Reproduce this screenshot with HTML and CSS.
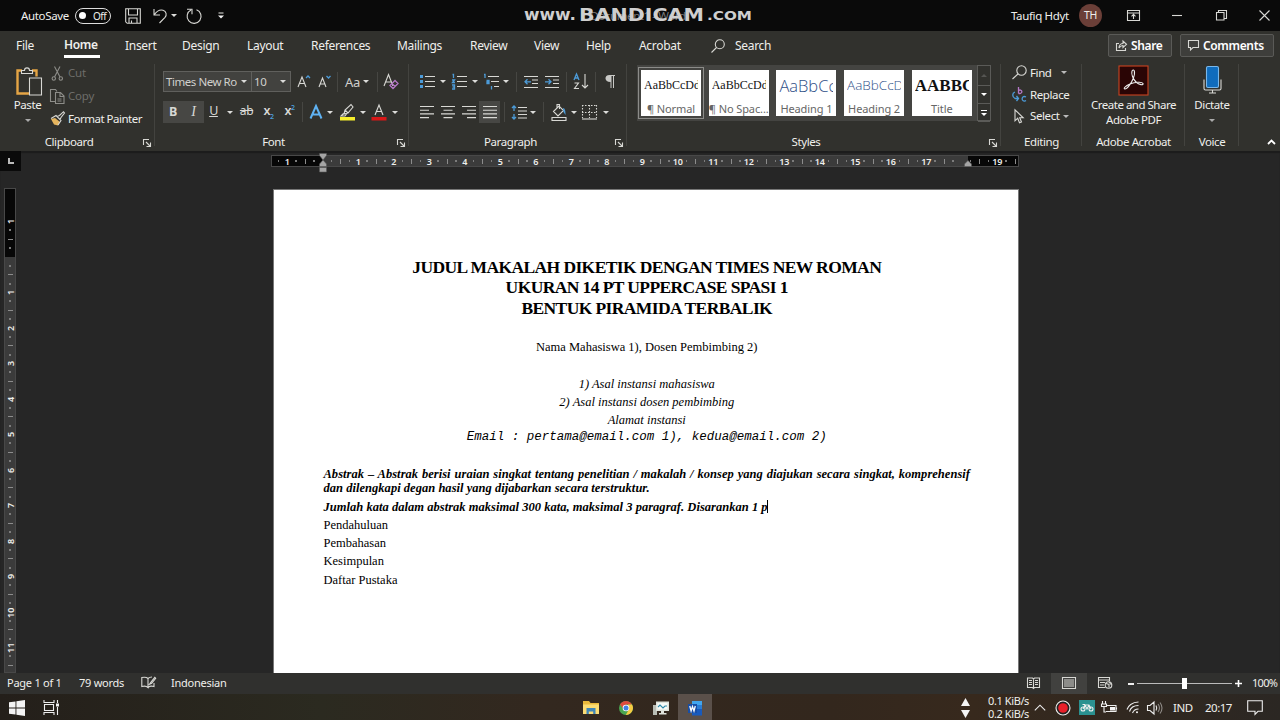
FILE: index.html
```html
<!DOCTYPE html>
<html lang="en">
<head>
    <meta charset="UTF-8">
    <meta name="viewport" content="width=device-width, initial-scale=1.0">
    <title>Document1 - Word</title>
    <link rel="stylesheet" href="styles.css">
</head>
<body>
    <header class="titlebar">
        <div class="quick">
            <span class="autosave">AutoSave</span>
            <span class="toggle"><i></i>Off</span>
            <svg class="save" width="16" height="16" viewBox="0 0 16 16"><path d="M.7.7h14.6v14.6H2.2L.7 13.8zM3.5 1v6h9V1M4 15v-5h8v5M6.5 15v-2.5"/></svg>
            <svg class="undo" width="15" height="16" viewBox="0 0 15 16"><path d="M1 1v6h6M1.3 6.600C4 3 7 1.300 10 2.300c3.500 1.200 4 4.700 2 7L6.500 15"/></svg>
            <i class="caret"></i>
            <svg class="redo" width="16" height="16" viewBox="0 0 16 16"><path d="M1 1.200h5v5M10.500 1.800a7 7 0 1 1-5.500.3"/></svg>
            <svg class="more" width="6" height="7" viewBox="0 0 6 7"><path d="M.5 1h5"/><path class="solid" d="M0 3.500h6L3 6.500z"/></svg>
        </div>
        <div class="doc-title">
            <span>Document1 - Word</span>
            <svg class="watermark" width="232" height="20" viewBox="0 0 232 20">
                <text x="1" y="16" font-size="15" textLength="52" lengthAdjust="spacingAndGlyphs">www.</text>
                <text x="56" y="16.500" font-size="17" textLength="125" lengthAdjust="spacingAndGlyphs">BANDICAM</text>
                <text x="184" y="16" font-size="12" textLength="45" lengthAdjust="spacingAndGlyphs">.COM</text>
            </svg>
        </div>
        <div class="account">
            <span class="user">Taufiq Hdyt</span>
            <span class="avatar">TH</span>
            <svg width="13" height="11" viewBox="0 0 13 11"><path d="M.5.5h12v10H.5zM.5 3h12M6.500 9V4.500M4.500 6.300l2-2 2 2"/></svg>
            <svg width="11" height="11" viewBox="0 0 11 11"><path d="M0 5.500h10"/></svg>
            <svg width="11" height="11" viewBox="0 0 11 11"><path d="M.5 2.500h7.500v7.500H.5zM2.500 2.500v-2h8v8H8"/></svg>
            <svg width="11" height="11" viewBox="0 0 11 11"><path d="M.5.5l10 10M10.500.5l-10 10"/></svg>
        </div>
    </header>

    <nav class="tabs">
        <span>File</span>
        <span class="active">Home</span>
        <span>Insert</span>
        <span>Design</span>
        <span>Layout</span>
        <span>References</span>
        <span>Mailings</span>
        <span>Review</span>
        <span>View</span>
        <span>Help</span>
        <span>Acrobat</span>
        <svg width="14" height="14" viewBox="0 0 14 14"><circle cx="8.800" cy="5.200" r="4.500"/><path d="M5.500 8.500L.5 13.500"/></svg>
        <span>Search</span>
        <div class="tab-buttons">
            <button class="share"><svg width="11" height="11" viewBox="0 0 11 11"><path d="M3 3.500H.5v7h9V8M3 8c0-3 2-4.500 4-4.500V1l3.500 3.300L7 7.500V5.500C5 5.500 4 6.500 3 8"/></svg>Share</button>
            <button class="comments"><svg width="11" height="11" viewBox="0 0 11 11"><path d="M.5.5h10v7H5L2.500 10V7.500h-2z"/></svg>Comments</button>
        </div>
    </nav>

    <section class="ribbon">
        <div class="group clipboard">
            <div class="body">
                <div class="paste">
                    <svg width="27" height="29" viewBox="0 0 27 29">
                        <path class="orange" d="M6 3.500H1.500v23H14M16 3.500h4.500v6"/>
                        <path d="M5.500 6.500V3.500h3c0-3.500 5-3.500 5 0h3v3z"/>
                        <path class="paper" d="M13.500 11h12v17h-12z"/>
                    </svg>
                    <span>Paste</span>
                    <i class="caret small"></i>
                </div>
                <div class="clip-list">
                    <div class="dim"><svg width="15" height="15" viewBox="0 0 15 15"><path d="M4.500.5L10 11M10 .5L4.500 11"/><circle cx="3.800" cy="12.500" r="1.700"/><circle cx="10.800" cy="12.500" r="1.700"/></svg>Cut</div>
                    <div class="dim"><svg width="15" height="15" viewBox="0 0 15 15"><path d="M5 12.500H.5V.5h5l1.500 2M5.500 3.500h5l3.500 3.500v7.500H5.500zM10 4v3.500h4M7.500 10h4M7.500 12h4"/></svg>Copy</div>
                    <div><svg width="15" height="15" viewBox="0 0 15 15"><path class="gold" d="M1 8l4-1 5 4-2 3.500-4-1z"/><path d="M1 7.500l5-3 5 5-3 4.500M7 5.500l2.500-1L13.500.7 14.500 2 11 6.500l-1 2"/></svg>Format Painter</div>
                </div>
            </div>
            <footer>Clipboard</footer>
            <svg class="launcher" width="8" height="8" viewBox="0 0 8 8"><path d="M.5 6V.5H6M3 3l4 4M7.500 3.500v4h-4"/></svg>
        </div>

        <div class="group font">
            <div class="body">
                <div class="row row1">
                    <div class="combos">
                        <span class="combo name">Times New Ro<i class="caret"></i></span>
                        <span class="combo size">10<i class="caret"></i></span>
                    </div>
                    <svg width="14" height="16" viewBox="0 0 14 16"><path d="M1 13L5 3l4 10M2.500 9.500h5"/><path class="blue" d="M9 4l2-2 2 2"/></svg>
                    <svg width="13" height="16" viewBox="0 0 13 16"><path d="M1 13L4.500 4l3.500 9M2.300 10h4.500"/><path class="blue" d="M8.500 2l2 2 2-2"/></svg>
                    <b class="sep"></b>
                    <span class="case">Aa<i class="caret"></i></span>
                    <b class="sep"></b>
                    <svg width="17" height="17" viewBox="0 0 17 17"><path d="M1 13L5.500 1.500 10 13M2.500 9h6"/><path class="purple" d="M7 12.500l5-5 3 3-5 5zM9 10.500l3 3"/></svg>
                </div>
                <div class="row row2">
                    <span class="on"><strong>B</strong></span>
                    <span class="on serif"><em>I</em></span>
                    <span><u>U</u></span>
                    <i class="caret"></i>
                    <span><s>ab</s></span>
                    <span class="script">x<sub>2</sub></span>
                    <span class="script">x<sup>2</sup></span>
                    <b class="sep"></b>
                    <svg width="14" height="15" viewBox="0 0 14 15"><path class="glow" d="M1.500 13.500L7 1l5.500 12.500M3.500 9.500h7"/></svg>
                    <i class="caret"></i>
                    <svg width="17" height="17" viewBox="0 0 17 17"><path d="M5 10l1-4 6-5.500L14 3 9 9zM6 6l3 3M4.500 9.500L2 12h4l1.500-2"/><path class="yellow" d="M1 13h15v3.500H1z"/></svg>
                    <i class="caret"></i>
                    <svg width="16" height="17" viewBox="0 0 16 17"><path d="M4 11L8 1l4 10M5.500 7.500h5"/><path class="red" d="M.5 13h15v3.500H.5z"/></svg>
                    <i class="caret"></i>
                </div>
            </div>
            <footer>Font</footer>
            <svg class="launcher" width="8" height="8" viewBox="0 0 8 8"><path d="M.5 6V.5H6M3 3l4 4M7.500 3.500v4h-4"/></svg>
        </div>

        <div class="group paragraph">
            <div class="body">
                <div class="row row1">
                    <svg width="15" height="15" viewBox="0 0 15 15"><path d="M5 2.500h10M5 7.500h10M5 12.500h10"/><path class="bluefill" d="M0 1h3v3H0zM0 6h3v3H0zM0 11h3v3H0z"/></svg>
                    <i class="caret"></i>
                    <svg width="15" height="16" viewBox="0 0 15 16"><path d="M5 2.500h10M5 7.500h10M5 12.500h10"/><path class="blue" d="M.5.5h1v3.500M0 6h2.500L.5 8.500h2.500M0 11h2.500v4H0M.5 13h2"/></svg>
                    <i class="caret"></i>
                    <svg width="15" height="16" viewBox="0 0 15 16"><path d="M4 2.500h11M7 7.500h8M10 12.500h5"/><path class="blue" d="M0 .5h1V4M2.500 6.500h2.500v3H3V8h2M7.500 12v3.500"/></svg>
                    <i class="caret"></i>
                    <b class="sep"></b>
                    <svg width="14" height="14" viewBox="0 0 14 14"><path d="M0 1.500h14M8 5h6M8 8.500h6M0 12.500h14"/><path class="blue" d="M7 6.800H1M3.500 4.300L1 6.800l2.500 2.500"/></svg>
                    <svg width="14" height="14" viewBox="0 0 14 14"><path d="M0 1.500h14M8 5h6M8 8.500h6M0 12.500h14"/><path class="blue" d="M0 6.800h6M3.500 4.300L6 6.800 3.500 9.300"/></svg>
                    <b class="sep"></b>
                    <svg width="16" height="17" viewBox="0 0 16 17"><path class="blue" d="M1 7l2.500-6L6 7M2 5h3"/><path d="M1.500 10h4l-4 5.500h4.500M12 1v14M9 12l3 3 3-3"/></svg>
                    <b class="sep"></b>
                    <svg width="11" height="13" viewBox="0 0 11 13"><path class="light" d="M4.500 0H10v1H9v12H8V1H6.500v12h-1V7C-1 7-1 0 4.500 0z"/></svg>
                </div>
                <div class="row row2">
                    <svg width="14" height="14" viewBox="0 0 14 14"><path d="M0 1.500h14M0 5.200h9M0 8.900h14M0 12.600h9"/></svg>
                    <svg width="14" height="14" viewBox="0 0 14 14"><path d="M0 1.500h14M2.500 5.200h9M0 8.900h14M2.500 12.600h9"/></svg>
                    <svg width="14" height="14" viewBox="0 0 14 14"><path d="M0 1.500h14M5 5.200h9M0 8.900h14M5 12.600h9"/></svg>
                    <span class="on"><svg width="14" height="14" viewBox="0 0 14 14"><path d="M0 1.500h14M0 5.200h14M0 8.900h14M0 12.600h14"/></svg></span>
                    <b class="sep"></b>
                    <svg width="16" height="15" viewBox="0 0 16 15"><path d="M7 2.500h9M7 6h9M7 9.500h9M7 13h9"/><path class="blue" d="M3 1v5M1 3l2-2 2 2M3 9v5M1 12l2 2 2-2"/></svg>
                    <i class="caret"></i>
                    <b class="sep"></b>
                    <svg width="16" height="17" viewBox="0 0 16 17"><path d="M2.500 7.500L8 2l4.500 4.500L7 12zM6 4V.5h2.500V5"/><path class="bluefill" d="M12 4c2 0 2.500 3 2.500 7l-2-3z"/><path d="M1 13.500h14v3H1z"/></svg>
                    <i class="caret"></i>
                    <svg width="15" height="15" viewBox="0 0 15 15"><path stroke-dasharray="1.500 1.500" d="M.5 0v13M14.500 0v13M7.500 0v13M0 .5h15M0 7.500h15"/><path d="M0 14h15"/></svg>
                    <i class="caret"></i>
                </div>
            </div>
            <footer>Paragraph</footer>
            <svg class="launcher" width="8" height="8" viewBox="0 0 8 8"><path d="M.5 6V.5H6M3 3l4 4M7.500 3.500v4h-4"/></svg>
        </div>

        <div class="group styles">
            <div class="body">
                <div class="gallery">
                    <div class="card selected"><p>AaBbCcDdEe</p><span>¶ Normal</span></div>
                    <div class="card"><p>AaBbCcDdEe</p><span>¶ No Spac...</span></div>
                    <div class="card h1"><p>AaBbCcDd</p><span>Heading 1</span></div>
                    <div class="card h2"><p>AaBbCcDdE</p><span>Heading 2</span></div>
                    <div class="card title"><p>AABBCC</p><span>Title</span></div>
                </div>
                <div class="scroller">
                    <span><i class="caret up"></i></span>
                    <span><i class="caret"></i></span>
                    <span class="expand"><i class="caret"></i></span>
                </div>
            </div>
            <footer>Styles</footer>
            <svg class="launcher" width="8" height="8" viewBox="0 0 8 8"><path d="M.5 6V.5H6M3 3l4 4M7.500 3.500v4h-4"/></svg>
        </div>

        <div class="group editing">
            <div class="body">
                <div><svg width="15" height="15" viewBox="0 0 15 15"><circle cx="9.500" cy="5.500" r="4.700"/><path d="M6 9L.5 14"/></svg>Find<i class="caret far"></i></div>
                <div><svg width="15" height="15" viewBox="0 0 15 15"><path class="purple" d="M6.500 0v6.500M6.500 3.500c3-2 5 2.500 1.500 3H6.500"/><path class="blue" d="M3 5C0 6 0 10 3 11.500h3M4.500 9l2 2.500-2 2.500M14 10c-3-1.500-4.500 1-3.500 3 .8 1.300 2.500 1.300 3.500.5"/></svg>Replace</div>
                <div><svg width="15" height="15" viewBox="0 0 15 15"><path d="M3 .8v11l2.700-2.500 1.800 4.500 2-.8-1.800-4.200h3.500z"/></svg>Select<i class="caret"></i></div>
            </div>
            <footer>Editing</footer>
        </div>

        <div class="group acrobat">
            <div class="body">
                <svg width="31" height="31" viewBox="0 0 31 31"><rect class="adobe" x="1" y="1" width="29" height="29"/><path class="swirl" d="M14 6c2-3 4 1 1 8-2 5-6 10-8 10s0-3 5-5c5-1.800 12-2.500 13-.5s-4 1.500-7-1.500c-3-3-5-8-4-11z"/></svg>
                <span>Create and Share<br>Adobe PDF</span>
            </div>
            <footer>Adobe Acrobat</footer>
        </div>

        <div class="group voice">
            <div class="body">
                <svg width="19" height="28" viewBox="0 0 19 28"><rect class="mic" x="3.500" y=".5" width="12" height="21" rx="1.500"/><path d="M1 13.500v9q0 1.500 1.500 1.500h14q1.500 0 1.500-1.500v-9M9.500 24v3M6 27h7"/></svg>
                <span>Dictate</span>
                <i class="caret small"></i>
            </div>
            <footer>Voice</footer>
        </div>

        <svg class="collapse" width="9" height="6" viewBox="0 0 9 6"><path d="M1 5l3.500-3.500L8 5"/></svg>
    </section>

    <main class="workspace">
        <div class="tab-stop"><svg width="6" height="6" viewBox="0 0 6 6"><path d="M1 0v5h5"/></svg></div>
        <div class="hruler" id="hruler">
            <svg class="indent" width="8" height="20" viewBox="0 0 8 20"><path d="M.5.5h7v2L4 7l3.500 4v2.500h-7V11L4 7 .5 2.500zM.5 14.500h7v4.500h-7z"/></svg>
            <svg class="indent right" width="8" height="7" viewBox="0 0 8 7"><path d="M.5 6.500V4L4 .5 7.500 4v2.500z"/></svg>
        </div>
        <div class="vruler" id="vruler"></div>
        <article class="page">
            <h1>JUDUL MAKALAH DIKETIK DENGAN TIMES NEW ROMAN<br>UKURAN 14 PT UPPERCASE SPASI 1<br>BENTUK PIRAMIDA TERBALIK</h1>
            <p class="authors">Nama Mahasiswa 1), Dosen Pembimbing 2)</p>
            <p class="origin">1) Asal instansi mahasiswa<br>2) Asal instansi dosen pembimbing<br>Alamat instansi</p>
            <p class="email">Email : pertama@email.com 1), kedua@email.com 2)</p>
            <p class="abstract">Abstrak – Abstrak berisi uraian singkat tentang penelitian / makalah / konsep yang diajukan secara singkat, komprehensif dan dilengkapi degan hasil yang dijabarkan secara terstruktur.</p>
            <p class="abstract last">Jumlah kata dalam abstrak maksimal 300 kata, maksimal 3 paragraf. Disarankan 1 p<i class="cursor"></i></p>
            <p class="section">Pendahuluan</p>
            <p class="section">Pembahasan</p>
            <p class="section">Kesimpulan</p>
            <p class="section">Daftar Pustaka</p>
        </article>
    </main>

    <footer class="statusbar">
        <div class="status-left">
            <span>Page 1 of 1</span>
            <span>79 words</span>
            <svg width="15" height="13" viewBox="0 0 15 13"><path d="M7 2.500C5.500 1 3 1 .8 1.500v9c2-.5 4.700-.5 6.200 1V2.500c1-1 2.500-1.500 4-1.500M7 11.500c1.500-1.500 4-1.500 6-1V7M13.800 1.300l-4 5-1.300 2 2.200-1 4-5z"/></svg>
            <span>Indonesian</span>
        </div>
        <div class="status-right">
            <span class="view"><svg width="13" height="12" viewBox="0 0 13 12"><path d="M.5 1h5l1 1 1-1h5v9.500h-5l-1 1-1-1h-5zM6.500 2v9M2 3.500h3M2 5.500h3M2 7.500h3M8 3.500h3M8 5.500h3M8 7.500h3"/></svg></span>
            <span class="view current"><svg width="14" height="12" viewBox="0 0 14 12"><path d="M.5.5h13v11H.5zM2 3h10M2 5h10M2 7h10M2 9h10"/></svg></span>
            <span class="view"><svg width="15" height="12" viewBox="0 0 15 12"><path d="M7 10.500H.5V.5h11V4M.5 3h11M2 5.500h5M2 8h4"/><circle cx="10.500" cy="8" r="3.300"/><path d="M8 6.500l3 1v3M11 5l2.500 3"/></svg></span>
            <span class="minus"></span>
            <span class="slider"><i></i></span>
            <svg class="plus" width="7" height="7" viewBox="0 0 7 7"><path d="M0 3.500h7M3.500 0v7"/></svg>
            <span class="zoom">100%</span>
        </div>
    </footer>

    <footer class="taskbar">
        <div class="start">
            <svg width="16" height="16" viewBox="0 0 16 16"><path class="white" d="M0 2.300L6.500 1.400v6.200H0zM7.400 1.200L16 0v7.600H7.400zM0 8.400h6.500v6.200L0 13.700zM7.400 8.400H16V16l-8.600-1.200z"/></svg>
            <svg width="17" height="15" viewBox="0 0 17 15"><path d="M1 0v2.500h10V0M1 15v-2.500h10V15M1.500 4.500h9v6h-9zM14.500 0v3M14.500 7v8"/><path class="white" d="M13 3.500h3v3h-3z"/></svg>
        </div>
        <div class="apps">
            <span class="app"><svg width="16" height="14" viewBox="0 0 16 14"><path fill="#e9b93c" d="M0 0h6l1.500 2H16v11H0z"/><path fill="#fbdc74" d="M0 3.500h16V13H0z"/><path fill="#3f86b8" d="M3.500 13V7h9v6h-2.300v-2.500H5.800V13z"/></svg></span>
            <span class="app"><svg width="14" height="14" viewBox="0 0 14 14"><circle cx="7" cy="7" r="7" fill="#4ba651"/><path fill="#de4b3d" d="M1 3.500A7 7 0 0 1 13 3.500H7L4.500 8z"/><path fill="#f6cc43" d="M13 3.500A7 7 0 0 1 6.800 14L9.500 9 9 3.500z"/><circle cx="7" cy="7" r="3.300" fill="#fff"/><circle cx="7" cy="7" r="2.500" fill="#4280e3"/></svg></span>
            <span class="app"><svg width="16" height="15" viewBox="0 0 16 15"><path fill="#b9bdb5" d="M0 4h4v10H0z"/><path fill="#dfe3dc" d="M3 .5h13V10H3zM8 10h3v2h2.500v1.500H6V12h2z"/><path fill="#f6faf7" d="M4.500 2h10v6.500h-10z"/><path stroke="#2e88a8" d="M5 6l2-2 3 3 2-2h2"/></svg></span>
            <span class="app open"><svg width="14" height="15" viewBox="0 0 14 15"><path fill="#41a5ee" d="M4 0h10v4H4z"/><path fill="#2b7cd3" d="M4 4h10v4H4z"/><path fill="#185abd" d="M4 8h10v6.500H4z"/><path fill="#174ea6" d="M0 3h9v9H0z"/><path stroke="#fff" stroke-width="1.300" d="M1.800 5l1.300 5 1.400-4.500L6 10l1.300-5"/></svg></span>
        </div>
        <div class="tray">
            <svg class="updown" width="9" height="22" viewBox="0 0 9 22"><path class="white" d="M0 9l4.500-8L9 9zM0 13h9l-4.500 8z"/></svg>
            <span class="speed">0.1 KiB/s<br>0.2 KiB/s</span>
            <svg width="12" height="7" viewBox="0 0 12 7"><path d="M.8 6.300L6 1.200l5.200 5.100"/></svg>
            <svg width="16" height="16" viewBox="0 0 16 16"><circle cx="8" cy="8" r="7" fill="#222"/><circle class="record" cx="8" cy="8" r="4.800"/></svg>
            <svg width="16" height="15" viewBox="0 0 16 15"><path class="teal" d="M0 0h16v15H0z"/><circle cx="4" cy="9" r="2"/><circle cx="12" cy="9" r="2"/><path d="M4 9l2-4h4l2 4M6 5l2 4 2-4M3.500 4.500H6"/></svg>
            <svg width="16" height="13" viewBox="0 0 16 13"><path d="M5 4.500h10v6H5M15.500 6.500v2"/><path class="white" d="M9 6h5v3.500H9z"/><path d="M1.500 0v3M4.500 0v3M.5 3h5v2.500H.5zM3 6v5h2"/></svg>
            <svg width="13" height="13" viewBox="0 0 13 13"><path d="M1 8.500C2 5 6 1 12.500 1M3.500 10.500c1-3.500 4-6 9-6M6.500 12c1-2.500 3-4 6-4"/><circle class="white" cx="11" cy="11.300" r="1"/></svg>
            <svg width="16" height="14" viewBox="0 0 16 14"><path d="M.5 4.500h2.500L7 1v12L3 9.500H.5zM9 4.500q1.500 2.500 0 5"/><path opacity=".5" d="M11 3q3 4 0 8M13 1.500q4 5.500 0 11"/></svg>
            <span class="lang">IND</span>
            <span class="clock">20:17</span>
            <svg width="16" height="15" viewBox="0 0 16 15"><path d="M.7.7h14.600v10.600H11L8 14.300v-3H.7z"/></svg>
        </div>
    </footer>

    <script>
        // four marks per centimetre: number, dot, half line, dot
        function drawRuler(id, first, last, hidden) {
            const ruler = document.getElementById(id);
            for (let i = first; i <= last; i++) {
                const mark = document.createElement('span');
                if (i % 4 === 0) {
                    mark.className = 'num';
                    if (!hidden.includes(i)) mark.textContent = Math.abs(i / 4);
                } else {
                    mark.className = i % 2 === 0 ? 'half' : 'dot';
                }
                ruler.appendChild(mark);
            }
        }
        drawRuler('hruler', -5, 78, [0, 72]);
        drawRuler('vruler', -4, 46, [0]);
    </script>
</body>
</html>
```
FILE: styles.css
```css
*{
    box-sizing: border-box;
}
body{
    margin: 0;
    width: 1280px;
    height: 720px;
    overflow: hidden;
    display: flex;
    flex-direction: column;
    background-color: #262626;
    color: #efefec;
    font-family: "Noto Sans", "Open Sans", sans-serif;
    font-size: 11.5px;
    line-height: 14px;
    letter-spacing: -0.4px;
}
svg{
    fill: none;
    stroke: #d8d8d4;
    stroke-width: 1.1;
    flex: none;
    overflow: visible;
}
p, h1{
    margin: 0;
}
.white, .light, .solid{
    fill: #f4f4f4;
    stroke: none;
}
.light{
    fill: #c8c8c5;
}
.blue{
    stroke: #4c9bd8;
    stroke-width: 1.3;
}
.bluefill{
    fill: #4c9bd8;
    stroke: none;
}
.purple{
    stroke: #b678c8;
    stroke-width: 1.3;
}
.caret{
    display: inline-block;
    flex: none;
    border: 3px solid transparent;
    border-top-color: #dcdcda;
    border-bottom: 0;
    width: 0;
    height: 0;
}
.caret.small{
    border-top-color: #aaa;
}

/* title bar */
.titlebar{
    height: 31px;
    flex: none;
    background-color: #0a0a0a;
    display: grid;
    grid-template-columns: 500px 276px 1fr;
}
.quick{
    display: flex;
    align-items: center;
    padding-left: 21px;
}
.autosave{
    width: 54px;
    letter-spacing: -0.35px;
}
.toggle{
    width: 36px;
    height: 16px;
    border: 1.500px solid #ddd;
    border-radius: 8px;
    display: flex;
    align-items: center;
    padding-left: 3px;
    gap: 7px;
    font-size: 10px;
    letter-spacing: -0.5px;
}
.toggle i{
    width: 7px;
    height: 7px;
    border-radius: 50%;
    background: #fff;
}
.save{
    margin-left: 14px;
}
.undo{
    margin-left: 12px;
}
.quick .caret{
    margin-left: 3px;
}
.redo{
    margin-left: 9px;
}
.more{
    margin-left: 16px;
}
.doc-title{
    position: relative;
    display: flex;
    align-items: center;
    justify-content: center;
    color: #777;
}
.watermark{
    position: absolute;
    left: 23px;
    top: 4px;
    fill: #cfcfcf;
    stroke: none;
    font-family: "DejaVu Sans", sans-serif;
    font-weight: bold;
    letter-spacing: 0;
}
.account{
    display: grid;
    grid-template-columns: 68px 48px 45px 44px 43px 20px;
    align-items: center;
    justify-items: start;
    padding-left: 235px;
}
.user{
    letter-spacing: -0.35px;
}
.avatar{
    width: 23px;
    height: 23px;
    border-radius: 50%;
    background: #6b3f38;
    text-align: center;
    font-size: 10.5px;
    line-height: 22px;
}

/* tabs */
.tabs{
    height: 31px;
    flex: none;
    background-color: #31312d;
    display: grid;
    grid-template-columns: 48px 61px 57px 65px 64px 86px 73px 64px 52px 53px 72px 24px 60px 1fr;
    align-items: center;
    padding: 0 0 2px 16px;
    font-size: 12px;
    letter-spacing: -0.3px;
}
.tabs span{
    line-height: 20px;
}
.tabs .active{
    font-weight: 600;
    justify-self: start;
    margin-top: 2px;
    height: 23px;
    border-bottom: 3px solid #fff;
    letter-spacing: -0.35px;
    width: 36px;
}
.tab-buttons{
    display: flex;
    gap: 8px;
    padding-left: 313px;
}
.tab-buttons button{
    height: 23px;
    padding: 0 0 0 7px;
    border: 1px solid #5a5a57;
    border-radius: 2px;
    background: #3e3e3b;
    color: #fff;
    font: 600 12px "Noto Sans", sans-serif;
    letter-spacing: -0.35px;
    display: flex;
    align-items: center;
    gap: 4px;
}
.share{
    width: 64px;
}
.comments{
    width: 94px;
}

/* ribbon */
.ribbon{
    height: 89px;
    flex: none;
    background-color: #31312d;
    display: grid;
    grid-template-columns: 155px 254px 218px 374px 81px 103px 54px 1fr;
}
.group{
    position: relative;
    display: flex;
    flex-direction: column;
    background: linear-gradient(#43433f, #43433f) right 2px / 1px 82px no-repeat;
}
.group .body{
    height: 72px;
}
.group footer{
    text-align: center;
    line-height: 16px;
    height: 16px;
    letter-spacing: -0.4px;
}
.clipboard footer{
    padding-right: 17px;
}
.font footer{
    padding-right: 17px;
}
.paragraph footer{
    padding-right: 15px;
}
.styles footer{
    padding-right: 16px;
}
.launcher{
    position: absolute;
    right: 4px;
    bottom: 4px;
}
.row{
    display: grid;
    align-items: center;
    justify-items: center;
}
.row1{
    height: 21px;
    margin-top: 9px;
}
.row2{
    height: 22px;
    margin-top: 9px;
}
.row > span{
    white-space: nowrap;
}
.sep{
    width: 1px;
    height: 20px;
    background: #464642;
}
.on{
    width: 100%;
    height: 22px;
    background: #474744;
    display: flex;
    align-items: center;
    justify-content: center;
}

.clipboard .body{
    display: flex;
}
.paste{
    width: 50px;
    display: flex;
    flex-direction: column;
    align-items: center;
    padding: 5px 0 0 5px;
}
.paste svg{
    margin-left: 3px;
}
.paste span{
    margin-top: 2px;
}
.paste .caret{
    margin-top: 7px;
}
.orange{
    stroke: #e5a545;
    stroke-width: 2.4;
}
.paper{
    fill: #31312d;
}
.gold{
    fill: #e5b55e;
    stroke: none;
}
.clip-list{
    display: flex;
    flex-direction: column;
}
.clip-list div{
    height: 22.7px;
    display: flex;
    align-items: center;
    gap: 3px;
    white-space: nowrap;
    letter-spacing: -0.5px;
}
.clip-list .dim{
    color: #6d6d69;
    letter-spacing: -0.2px;
}
.dim svg{
    stroke: #8d8d89;
}

.font .body{
    padding-left: 8px;
}
.font .row1{
    grid-template-columns: 128px 25px 16px 10px 30px 10px 18px;
}
.font .row2{
    grid-template-columns: 20px 21px 19px 14px 19px 25px 17px 8px 19px 10px 24px 8px 24px 8px;
    font-size: 12.500px;
    color: #d8d8d5;
}
.row2 > span:not(.on){
    margin-top: -2px;
}
.combos{
    display: flex;
    width: 128px;
}
.combo{
    height: 21px;
    border: 1px solid #60605d;
    background: #42423f;
    display: flex;
    align-items: center;
    justify-content: space-between;
    padding: 0 4px 0 2px;
    color: #d0d0cd;
    white-space: nowrap;
}
.name{
    width: 89px;
    letter-spacing: -0.45px;
}
.size{
    width: 40px;
    margin-left: -1px;
}
.case{
    font-size: 13px;
    display: flex;
    align-items: center;
    gap: 3px;
    color: #d0d0cd;
}
.serif{
    font-family: "Liberation Serif", serif;
    font-size: 14px;
}
.row2 .script{
    font-weight: 600;
}
.row2 sub, .row2 sup{
    font-size: 7px;
    line-height: 0;
    color: #4c9bd8;
}
.row2 s{
    font-size: 12px;
}
.glow{
    stroke: #5fb2f2;
    stroke-width: 2;
}
.yellow{
    fill: #f6ee2c;
    stroke: none;
}
.red{
    fill: #d81818;
    stroke: none;
}

.paragraph .body{
    padding-left: 8px;
}
.paragraph .row1{
    grid-template-columns: 20px 12px 20px 11px 22px 7px 14px 16px 26px 3px 26px 3px 26px;
}
.paragraph .row2{
    grid-template-columns: 20px 22px 20px 21px 8px 22px 5px 17px 14px 15px 17px 15px;
}

.styles .body{
    display: flex;
    padding: 3px 0 0 10px;
}
.gallery{
    width: 340px;
    height: 56px;
    background: #444441;
    display: grid;
    grid-template-columns: repeat(5, 60px);
    column-gap: 7.7px;
    padding: 5px 0 0 4px;
}
.card{
    height: 46px;
    background: #fff;
    text-align: center;
    color: #666;
    padding: 0 3px;
    font-size: 11px;
    letter-spacing: -0.1px;
    white-space: nowrap;
}
.card.selected{
    outline: 1.500px solid #8c8c89;
    outline-offset: 2px;
}
.card p{
    height: 31px;
    line-height: 31px;
    overflow: hidden;
    text-align: left;
    color: #111;
    font-family: "Liberation Serif", serif;
    font-size: 12px;
    letter-spacing: 0;
}
.card span{
    display: block;
    margin: 1px -3px 0;
}
.card.h1 p{
    color: #2f5088;
    font-family: "Open Sans", sans-serif;
    font-weight: 300;
    font-size: 16.500px;
}
.card.h2 p{
    color: #2f5088;
    font-family: "Open Sans", sans-serif;
    font-weight: 300;
    font-size: 13.500px;
}
.card.title p{
    font-weight: bold;
    font-size: 17px;
}
.scroller{
    width: 14px;
    height: 56px;
    display: grid;
    grid-template-rows: 20px 18px 18px;
    border: 1px solid #5b5b58;
}
.scroller span{
    display: flex;
    flex-direction: column;
    align-items: center;
    justify-content: center;
    border-bottom: 1px solid #5b5b58;
}
.scroller .up{
    border-bottom: 3px solid #555552;
    border-top: 0;
}
.scroller .caret:not(.up){
    border-top-color: #fff;
}
.expand::before{
    content: "";
    width: 6px;
    height: 1px;
    margin-bottom: 2px;
    background: #fff;
}

.editing .body{
    padding-left: 11px;
}
.editing .body div{
    height: 21.700px;
    display: flex;
    align-items: center;
    gap: 3px;
}
.editing .caret{
    border-top-color: #bbb;
}
.editing .far{
    margin-left: 6px;
}
.acrobat .body, .voice .body{
    display: flex;
    flex-direction: column;
    align-items: center;
    text-align: center;
    padding-top: 3px;
    line-height: 15px;
    white-space: nowrap;
}
.acrobat .body span{
    margin-top: 1px;
    letter-spacing: -0.5px;
}
.adobe{
    fill: #2a0505;
    stroke: #c9421f;
}
.swirl{
    stroke: #eee;
}
.mic{
    fill: #0f6cbd;
    stroke: #79b7ea;
}
.voice .body svg{
    margin-top: 1px;
}
.voice .body span{
    margin-top: 3px;
}
.voice .caret{
    margin-top: 7px;
}
.collapse{
    align-self: end;
    justify-self: end;
    margin: 0 4px 6px 0;
    stroke: #fff;
    stroke-width: 1.800;
}

/* workspace */
.workspace{
    height: 522px;
    flex: none;
    overflow: hidden;
    display: grid;
    grid-template-columns: 273px 746px;
    grid-template-rows: 38px 1fr;
    box-shadow: inset 0 2px 1px #1c1c1c;
}
.tab-stop{
    width: 21px;
    height: 20px;
    background: #0a0a0a;
    display: flex;
    align-items: center;
    justify-content: center;
}
.tab-stop svg{
    stroke: #bbb;
    stroke-width: 2;
}
.hruler{
    position: relative;
    width: 748px;
    height: 12px;
    margin: 4px 0 0 -2px;
    padding-left: 2px;
    display: flex;
    border: 1px solid #484848;
    background: linear-gradient(90deg, #070707 51px, #3b3b3b 51px, #3b3b3b 696px, #070707 696px);
    font: 600 9px "Noto Sans", sans-serif;
    letter-spacing: 0;
}
.hruler span, .vruler span{
    flex: none;
    display: flex;
    align-items: center;
    justify-content: center;
}
.hruler span{
    width: 8.880px;
    height: 10px;
}
.dot::before{
    content: "";
    width: 1.500px;
    height: 2px;
    background: #7c7c7c;
}
.half::before{
    content: "";
    width: 1px;
    height: 5px;
    background: #8c8c8c;
}
.indent{
    position: absolute;
    left: 47px;
    top: -3px;
    fill: #a5a5a5;
    stroke: #555;
    stroke-width: .6;
}
.indent.right{
    left: 692px;
    top: 4px;
}
.vruler{
    width: 12px;
    margin: -1px 0 0 4px;
    padding-top: 28px;
    display: flex;
    flex-direction: column;
    border: 1px solid #484848;
    background: linear-gradient(#070707 68px, #3b3b3b 68px);
    font: 600 9px "Noto Sans", sans-serif;
    letter-spacing: 0;
}
.vruler span{
    width: 10px;
    height: 8.880px;
}
.vruler .num{
    writing-mode: vertical-rl;
    transform: rotate(180deg);
}
.vruler .half::before{
    width: 5px;
    height: 1px;
}

/* document */
.page{
    background: #fff;
    color: #000;
    border: 1px solid #777;
    border-bottom: 0;
    padding: 67px 48px 0 49.500px;
    font-family: "Liberation Serif", serif;
    font-size: 12.500px;
    letter-spacing: 0;
    text-align: center;
}
.page h1{
    font-size: 17.500px;
    line-height: 20.300px;
    letter-spacing: -0.6px;
}
.authors{
    margin-top: 20px;
    line-height: 18px;
}
.origin{
    margin-top: 19px;
    line-height: 18px;
    font-style: italic;
}
.email{
    line-height: 17px;
    font-family: "Liberation Mono", monospace;
    font-style: italic;
}
.abstract{
    margin-top: 21px;
    font-weight: bold;
    font-style: italic;
    text-align: justify;
    line-height: 14.500px;
    letter-spacing: 0.03px;
}
.abstract.last{
    margin-top: 2px;
    line-height: 18px;
    text-align: left;
}
.cursor{
    display: inline-block;
    width: 1px;
    height: 13px;
    background: #000;
    vertical-align: -2px;
    margin-left: -1px;
}
.section{
    text-align: left;
    line-height: 18.200px;
}

/* status bar */
.statusbar{
    height: 21px;
    flex: none;
    background: #30302e;
    display: flex;
    justify-content: space-between;
    font-size: 11px;
    letter-spacing: -0.25px;
}
.status-left{
    display: grid;
    grid-template-columns: 72px 62px 30px 80px;
    padding: 0 0 2px 7px;
    align-items: center;
}
.status-right{
    display: grid;
    grid-template-columns: 36px 36px 36px 14px 95px 20px 28px;
    align-items: center;
}
.view{
    height: 21px;
    padding-bottom: 1px;
    display: flex;
    align-items: center;
    justify-content: center;
}
.current{
    background: #41413f;
}
.minus{
    width: 6px;
    height: 2px;
    margin-left: 5px;
    background: #eee;
}
.slider{
    height: 1px;
    background: #bbb;
    display: flex;
    align-items: center;
    justify-content: center;
}
.slider i{
    width: 5px;
    height: 11px;
    background: #fff;
}
.plus{
    margin-left: 3px;
    stroke: #fff;
    stroke-width: 1.600;
}
.zoom{
    letter-spacing: -0.7px;
    padding-bottom: 1px;
}

/* taskbar */
.taskbar{
    height: 26px;
    flex: none;
    background: linear-gradient(90deg, #241f1a, #2b2a20 25%, #33281f 42%, #33271d 65%, #37291d 76%, #2b2723);
    display: grid;
    grid-template-columns: 573px 1fr 319px;
}
.taskbar svg{
    stroke: #eee;
}
.taskbar .white{
    stroke: none;
}
.apps svg{
    stroke: none;
}
.start{
    display: flex;
    align-items: center;
    gap: 18px;
    padding: 1px 0 0 9px;
}
.apps{
    display: flex;
}
.app{
    width: 35px;
    padding-top: 2px;
    display: flex;
    align-items: center;
    justify-content: center;
}
.open{
    background: #5a504a;
    width: 34px;
}
.tray{
    display: grid;
    grid-template-columns: 27px 46px 21px 24px 22px 25px 21px 26px 32px 42px 20px;
    align-items: center;
    padding-top: 1px;
}
.record{
    fill: #e8202a;
    stroke: none;
}
.teal{
    fill: #2b9190;
    stroke: none;
}
.speed{
    font-size: 11px;
    line-height: 12.500px;
    letter-spacing: -0.4px;
    white-space: nowrap;
}
.lang, .clock{
    letter-spacing: -0.5px;
}
```
